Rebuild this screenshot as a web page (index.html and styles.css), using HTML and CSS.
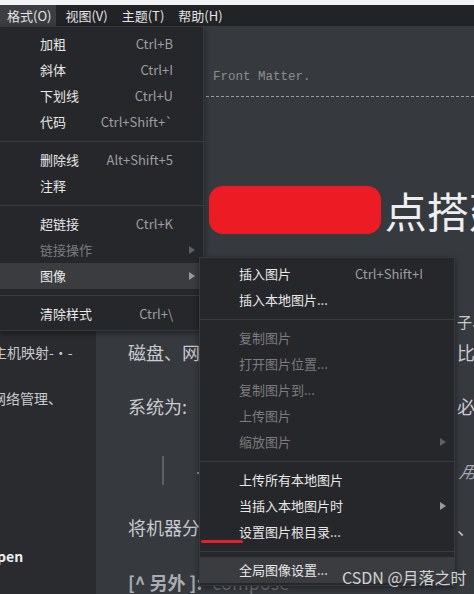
FILE: index.html
```html
<!DOCTYPE html>
<html>
<head>
    <title>Typora 图像菜单</title>
    <link rel="stylesheet" href="styles.css">
</head>
<body>
    <div class="page">
        <div class="top-strip"></div>
        <div class="menubar">
            <span class="menubar-item active">格式(O)</span>
            <span class="menubar-item">视图(V)</span>
            <span class="menubar-item">主题(T)</span>
            <span class="menubar-item">帮助(H)</span>
        </div>

        <div class="main">
            <div class="sidebar">
                <div class="side-line first">主机映射-·-</div>
                <div class="side-line second">网络管理、</div>
                <div class="side-line third">pen</div>
            </div>

            <div class="editor">
                <div class="front-matter">Front Matter.</div>
                <div class="fm-rule"></div>

                <div class="title">
                    <span class="title-tail">n</span>
                    <span class="redact"></span>
                    <span>点搭建</span>
                </div>

                <div class="line first"><span></span><span>子、</span></div>
                <div class="line"><span>磁盘、网</span><span>比</span></div>
                <div class="line third"><span>系统为: </span><span>必须</span></div>
                <div class="quote"><span class="quote-bar"></span><span class="quote-end">用</span></div>
                <div class="line fourth"><span>将机器分</span><span>、</span></div>
                <div class="line fifth"><span class="footnote">[^ 另外 ]: <span class="code">compose</span></span><span></span></div>
            </div>
        </div>

        <!-- format menu -->
        <div class="menu format-menu">
            <div class="item"><span>加粗</span><span class="key">Ctrl+B</span></div>
            <div class="item"><span>斜体</span><span class="key">Ctrl+I</span></div>
            <div class="item"><span>下划线</span><span class="key">Ctrl+U</span></div>
            <div class="item"><span>代码</span><span class="key">Ctrl+Shift+`</span></div>
            <div class="sep"></div>
            <div class="item"><span>删除线</span><span class="key">Alt+Shift+5</span></div>
            <div class="item"><span>注释</span></div>
            <div class="sep"></div>
            <div class="item"><span>超链接</span><span class="key">Ctrl+K</span></div>
            <div class="item disabled"><span>链接操作</span><span class="arrow"></span></div>
            <div class="item hover"><span>图像</span><span class="arrow"></span></div>
            <div class="sep"></div>
            <div class="item"><span>清除样式</span><span class="key">Ctrl+\</span></div>
        </div>

        <!-- image submenu -->
        <div class="menu image-menu">
            <div class="item"><span>插入图片</span><span class="key">Ctrl+Shift+I</span></div>
            <div class="item"><span>插入本地图片...</span></div>
            <div class="sep"></div>
            <div class="item disabled"><span>复制图片</span></div>
            <div class="item disabled"><span>打开图片位置...</span></div>
            <div class="item disabled"><span>复制图片到...</span></div>
            <div class="item disabled"><span>上传图片</span></div>
            <div class="item disabled"><span>缩放图片</span><span class="arrow"></span></div>
            <div class="sep"></div>
            <div class="item"><span>上传所有本地图片</span></div>
            <div class="item"><span>当插入本地图片时</span><span class="arrow"></span></div>
            <div class="item"><span>设置图片根目录...</span></div>
            <div class="sep"></div>
            <div class="item hover"><span>全局图像设置...</span></div>
        </div>

        <div class="red-mark"></div>
        <div class="watermark">CSDN @月落之时</div>
    </div>
</body>
</html>
```

FILE: styles.css
```css
body { margin: 0; padding: 0; background: #363a3f; font-family: "Noto Sans CJK SC", "Liberation Sans", sans-serif; overflow: hidden; }
.page { position: relative; width: 474px; height: 594px; overflow: hidden; }

.top-strip { height: 5px; background: #f2f3f5; }
.menubar { height: 21px; background: #222326; display: flex; font-size: 13px; color: #e4e4e4; }
.menubar-item { padding: 0 7px 0 7px; line-height: 21px; }
.menubar-item.active { background: #3b3d41; padding-right: 5px; margin-right: 2px; }

.main { display: flex; height: 568px; }
.sidebar { width: 96px; background: #2a2b2e; overflow: hidden; font-size: 14px; color: #c9cacc; }
.side-line { line-height: 20px; white-space: nowrap; }
.side-line.first { margin: 316px 0 0 -7px; }
.side-line.second { margin: 26px 0 0 -8px; }
.side-line.third { margin: 138px 0 0 -3px; color: #eeeeee; font-weight: bold; }

.editor { flex: 1; padding-left: 32px; overflow: hidden; color: #c9cbce; font-size: 18px; }
.front-matter { margin-top: 42px; padding-left: 85px; line-height: 18px; font-family: "Liberation Mono", monospace; font-size: 12.5px; color: #8b8e92; }
.fm-rule { margin: 10px 0 0 -32px; border-top: 1px dashed #9a9ca0; }

.title { margin-top: 88px; height: 50px; display: flex; align-items: center; padding-left: 52px; font-size: 42px; color: #eceef0; line-height: 50px; white-space: nowrap; }
.title-tail { margin-right: 3px; }
.redact { flex: none; width: 172px; height: 48px; background: #ec1b24; border-radius: 14px; margin-right: 4px; }

.line { display: grid; grid-template-columns: 329px auto; line-height: 30px; height: 30px; white-space: nowrap; }
.line.first { margin-top: 72px; font-size: 15px; }
.line.third { margin-top: 24px; }
.line.fourth { margin-top: 27px; }
.line.fifth { margin-top: 25px; }
.footnote { font-weight: bold; color: #a9acb0; }
.footnote .code { font-weight: normal; color: #6f7276; margin-left: 6px; }

.quote { display: grid; grid-template-columns: 332px auto; margin-top: 34px; height: 30px; align-items: center; }
.quote-bar { width: 2px; height: 29px; margin-left: 34px; background: #5d6166; position: relative; }
.quote-bar::after { content: ""; position: absolute; left: 35px; top: 16px; width: 2px; height: 2px; background: #8a8d91; }
.quote-end { font-style: italic; color: #a4a7ab; font-size: 17px; transform: skewX(-12deg); }

.menu { position: absolute; background: #26272a; border: 1px solid #38393c; box-shadow: 0 2px 6px rgba(0, 0, 0, 0.45); font-size: 13px; color: #e8e8e8; }
.format-menu { left: -1px; top: 26px; width: 203px; padding: 4px 0 3px 0; }
.image-menu { left: 199px; top: 257px; width: 254px; padding: 3px 0 2px 0; }

.item { height: 26px; line-height: 26px; display: flex; justify-content: space-between; align-items: center; padding: 0 30px 0 40px; position: relative; }
.image-menu .item { padding: 0 31px 0 39px; }
.item.disabled { color: #7b7c7f; }
.item.hover { background: #3a3c40; }
.key { color: #9d9ea1; }
.arrow { position: absolute; right: 8px; top: 9px; width: 0; height: 0; border-top: 4px solid transparent; border-bottom: 4px solid transparent; border-left: 6px solid #9a9b9e; }
.item.disabled .arrow { border-left-color: #5f6063; }
.sep { height: 12px; display: flex; align-items: center; }
.sep::after { content: ""; flex: 1; height: 1px; background: #3b3c3f; }

.red-mark { position: absolute; left: 201px; top: 540px; width: 42px; height: 3px; border-radius: 2px; background: #e0202a; }
.watermark { position: absolute; left: 342px; top: 565px; font-size: 16px; color: rgba(255, 255, 255, 0.78); white-space: nowrap; }
```
